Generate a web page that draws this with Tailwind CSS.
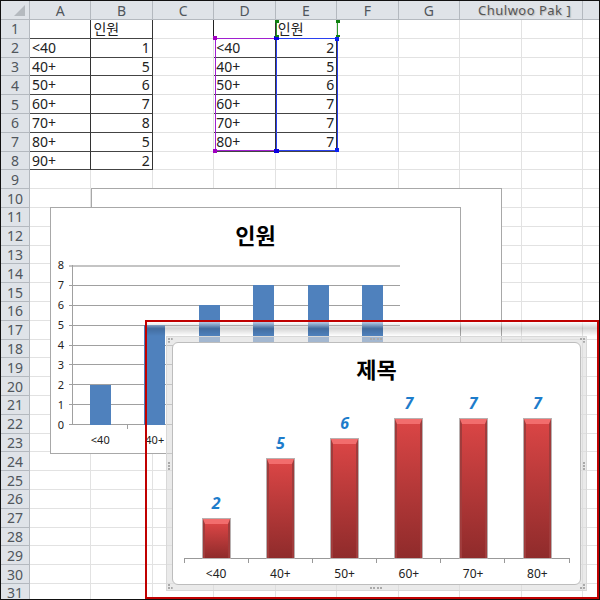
<!DOCTYPE html>
<html lang="ko">
<head>
  <meta charset="UTF-8" />
  <title>Chart</title>
  <script src="https://cdn.jsdelivr.net/npm/@tailwindcss/browser@4"></script>
</head>
<body class="bg-white">
  <div class="relative w-[600px] h-[600px] overflow-hidden bg-white text-[14px] text-[#222] font-['Noto_Sans','Noto_Sans_CJK_KR',sans-serif]">

    <!-- sheet -->
    <div id="sheet" class="grid grid-cols-[29px_repeat(10,61.45px)] grid-rows-[19px] auto-rows-[18.8px] w-[700px] pt-px pl-px"></div>

    <!-- user name over the header -->
    <div class="absolute left-[478px] top-[1px] h-[18px] leading-[18px] text-[13px] tracking-[0.5px] text-[#555] [text-shadow:1px_1px_1px_#bbb]">Chulwoo Pak ]</div>

    <!-- chart range handles -->
    <div class="absolute left-[215px] top-[38px] w-[62px] h-[113px] border border-[#a020d0]"></div>
    <div class="absolute left-[276px] top-[38px] w-[62px] h-[113px] border border-[#2a40f0]"></div>
    <div class="absolute left-[276px] top-[20px] w-[62px] h-[19px] border-x border-[#2a9a2a]"></div>
    <div class="absolute left-[213px] top-[36px] w-[4px] h-[4px] bg-[#a000c0]"></div>
    <div class="absolute left-[213px] top-[149px] w-[4px] h-[4px] bg-[#a000c0]"></div>
    <div class="absolute left-[274px] top-[36px] w-[5px] h-[4px] bg-[#0a00e0]"></div>
    <div class="absolute left-[274px] top-[149px] w-[5px] h-[4px] bg-[#0a00e0]"></div>
    <div class="absolute left-[335px] top-[37px] w-[4px] h-[4px] bg-[#0a20f0]"></div>
    <div class="absolute left-[335px] top-[148px] w-[4px] h-[4px] bg-[#0a20f0]"></div>
    <div class="absolute left-[275px] top-[20px] w-[4px] h-[3px] bg-[#108010]"></div>
    <div class="absolute left-[336px] top-[20px] w-[4px] h-[3px] bg-[#108010]"></div>
    <div class="absolute left-[275px] top-[35px] w-[4px] h-[2px] bg-[#108010]"></div>
    <div class="absolute left-[336px] top-[35px] w-[4px] h-[2px] bg-[#108010]"></div>

    <!-- back chart window -->
    <div class="absolute left-[91px] top-[188px] w-[411px] h-[210px] bg-white border border-[#a8a8a8]"></div>

    <!-- blue chart window -->
    <div class="absolute left-[50px] top-[207px] w-[411px] h-[247px] bg-white border border-[#a8a8a8]">
      <div class="h-[56px] pt-[10px] text-center text-[22px] leading-[34px] font-bold text-black">인원</div>
      <div class="flex h-[161px]">
        <div class="w-[13px] h-[161px] text-[11px] text-right leading-[20px] -mt-[9px] text-[#222]">
          <div class="h-[20px]">8</div><div class="h-[20px]">7</div><div class="h-[20px]">6</div><div class="h-[20px]">5</div><div class="h-[20px]">4</div><div class="h-[20px]">3</div><div class="h-[20px]">2</div><div class="h-[20px]">1</div><div class="h-[20px]">0</div>
        </div>
        <div class="relative ml-[5px] pl-[4px] w-[331px] h-[160px]">
          <div class="flex flex-col h-[160px] -ml-[4px] mt-[1px]">
            <div class="h-[20px] border-t-2 border-[#c4c4c4]"></div>
            <div class="h-[20px] border-t border-[#a0a0a0]"></div>
            <div class="h-[20px] border-t border-[#a0a0a0]"></div>
            <div class="h-[20px] border-t border-[#a0a0a0]"></div>
            <div class="h-[20px] border-t border-[#a0a0a0]"></div>
            <div class="h-[20px] border-t border-[#a0a0a0]"></div>
            <div class="h-[20px] border-t border-[#a0a0a0]"></div>
            <div class="h-[20px] border-t border-[#a0a0a0]"></div>
            <div class="border-t border-[#a0a0a0]"></div>
          </div>
          <div id="blueBars" class="absolute left-[3px] right-0 top-[1px] h-[160px] flex items-end border-l border-[#a0a0a0]"></div>
        </div>
      </div>
      <div class="ml-[22px] w-[54.5px] h-[4px] border-r border-[#a0a0a0]"></div>
      <div class="flex ml-[22px] mt-[3px] text-[11px] leading-[16px] w-[109px]">
        <div class="flex-1 text-center">&lt;40</div>
        <div class="flex-1 text-center">40+</div>
      </div>
    </div>

    <!-- selected chart, red box -->
    <div class="absolute left-[145px] top-[320px] w-[454px] h-[279px] border-2 border-[#c00000] z-10">
      <div class="h-[14px] bg-gradient-to-b from-white/60 via-black/15 to-transparent"></div>
    </div>

    <!-- frame of the selected chart -->
    <div class="absolute left-[166px] top-[336px] w-[421px] h-[255px] p-[5px] bg-[#dcdcdc]/60 border border-[#d8d8d8]">
      <div class="h-full bg-white border border-[#bdbdbd] rounded-[6px]">
        <div class="h-[54px] pt-[8px] text-center text-[22px] leading-[36px] font-bold text-black">제목</div>
        <div id="redBars" class="flex items-end ml-[11px] w-[385.5px] h-[161px]"></div>
        <div class="flex ml-[11px] w-[385.5px] h-[5px] border-t border-x border-[#999]">
          <div class="flex-1 border-r border-[#999]"></div>
          <div class="flex-1 border-r border-[#999]"></div>
          <div class="flex-1 border-r border-[#999]"></div>
          <div class="flex-1 border-r border-[#999]"></div>
          <div class="flex-1 border-r border-[#999]"></div>
          <div class="flex-1"></div>
        </div>
        <div class="flex ml-[11px] w-[385.5px] mt-[2px] text-[12px] leading-[18px] text-[#222]">
          <div class="flex-1 text-center">&lt;40</div>
          <div class="flex-1 text-center">40+</div>
          <div class="flex-1 text-center">50+</div>
          <div class="flex-1 text-center">60+</div>
          <div class="flex-1 text-center">70+</div>
          <div class="flex-1 text-center">80+</div>
        </div>
      </div>
      <!-- resize dots -->
      <div class="absolute left-[1px] top-[1px] w-[5px] h-[5px] border-t-2 border-l-2 border-dotted border-[#aaa]"></div>
      <div class="absolute right-[1px] top-[1px] w-[5px] h-[5px] border-t-2 border-r-2 border-dotted border-[#aaa]"></div>
      <div class="absolute left-[1px] bottom-[1px] w-[5px] h-[5px] border-b-2 border-l-2 border-dotted border-[#aaa]"></div>
      <div class="absolute right-[1px] bottom-[1px] w-[5px] h-[5px] border-b-2 border-r-2 border-dotted border-[#aaa]"></div>
      <div class="absolute left-[203px] bottom-[1px] w-[12px] border-b-2 border-dotted border-[#aaa]"></div>
      <div class="absolute left-[203px] top-[1px] w-[12px] border-t-2 border-dotted border-[#aaa]"></div>
      <div class="absolute left-[1px] top-[125px] h-[8px] border-l-2 border-dotted border-[#aaa]"></div>
      <div class="absolute right-[1px] top-[125px] h-[8px] border-r-2 border-dotted border-[#aaa]"></div>
    </div>

    <!-- outer frame of the picture -->
    <div class="absolute inset-0 border border-[#111] z-20 pointer-events-none"></div>
  </div>

  <script>
    const cols = ['A', 'B', 'C', 'D', 'E', 'F', 'G', '', '', ''];
    const table1 = [['', '인원'], ['<40', 1], ['40+', 5], ['50+', 6], ['60+', 7], ['70+', 8], ['80+', 5], ['90+', 2]];
    const table2 = [['', '인원'], ['<40', 2], ['40+', 5], ['50+', 6], ['60+', 7], ['70+', 7], ['80+', 7]];
    const chartValues = [2, 5, 6, 7, 7, 7];

    const headCell = 'flex items-center justify-center bg-[#dfe3e8] text-[#50565c] border-r border-b border-[#b4b9bf]';
    const headPlain = 'flex items-center justify-center bg-[#dfe3e8] text-[#50565c] border-b border-[#b4b9bf]';
    const plain = 'border-r border-b border-[#e2e2e2]';
    const boxed = 'px-[2px] leading-[18px] whitespace-nowrap border-b border-r border-b-[#444] border-r-[#333]';
    const boxedNoBottom = 'px-[2px] leading-[18px] whitespace-nowrap border-b border-r border-b-[#e2e2e2] border-r-[#333]';

    let html = '<div class="relative bg-[#dfe3e8] border-r border-b border-[#b4b9bf]"><div class="absolute left-[13px] top-[4px] w-0 h-0 border-l-[11px] border-l-transparent border-b-[11px] border-b-[#b5babf]"></div></div>';
    cols.forEach((c, i) => {
      html += '<div class="' + (i === 7 ? headPlain : headCell) + '">' + c + '</div>';
    });

    for (let r = 1; r <= 31; r++) {
      html += '<div class="' + headCell + '">' + r + '</div>';
      for (let c = 0; c < 10; c++) {
        let cls = plain, text = '';
        const t1 = c < 2 ? table1[r - 1] : null;
        const t2 = c === 3 || c === 4 ? table2[r - 1] : null;
        const row = t1 || t2;
        if (row) {
          const pos = c < 2 ? c : c - 3;
          text = row[pos];
          cls = boxed;
          if (t2 && r === 1) cls = c === 3 ? boxedNoBottom : 'px-[2px] leading-[18px] whitespace-nowrap border-b border-r border-[#e2e2e2]';
          if (typeof text === 'number') cls += ' text-right';
        }
        if (c === 2 && r === 1) cls = 'border-b border-r border-b-[#e2e2e2] border-r-[#222]';
        html += '<div class="' + cls + '">' + String(text).replace('<', '&lt;') + '</div>';
      }
    }
    document.getElementById('sheet').innerHTML = html;

    document.getElementById('blueBars').innerHTML = chartValues.map(v =>
      '<div class="flex-1 flex justify-center"><div class="w-[21px] bg-[#4f81bd]" style="height:' + v * 20 + 'px"></div></div>'
    ).join('');

    document.getElementById('redBars').innerHTML = chartValues.map(v =>
      '<div class="flex-1 flex flex-col items-center">' +
        '<div class="text-[16px] leading-[24px] mb-[4px] italic font-bold text-[#1d7ccb] font-[\'Liberation_Sans\',sans-serif]">' + v + '</div>' +
        '<div class="w-[27px] box-border bg-gradient-to-b from-[#d94545] to-[#8f2b2b] border-t-[5px] border-x-[2px] border-t-[#f26d6d] border-x-[#a03c3c] shadow-[0_0_0_1px_#b8b0b0]" style="height:' + (v * 20 - 1) + 'px"></div>' +
      '</div>'
    ).join('');
  </script>
</body>
</html>
